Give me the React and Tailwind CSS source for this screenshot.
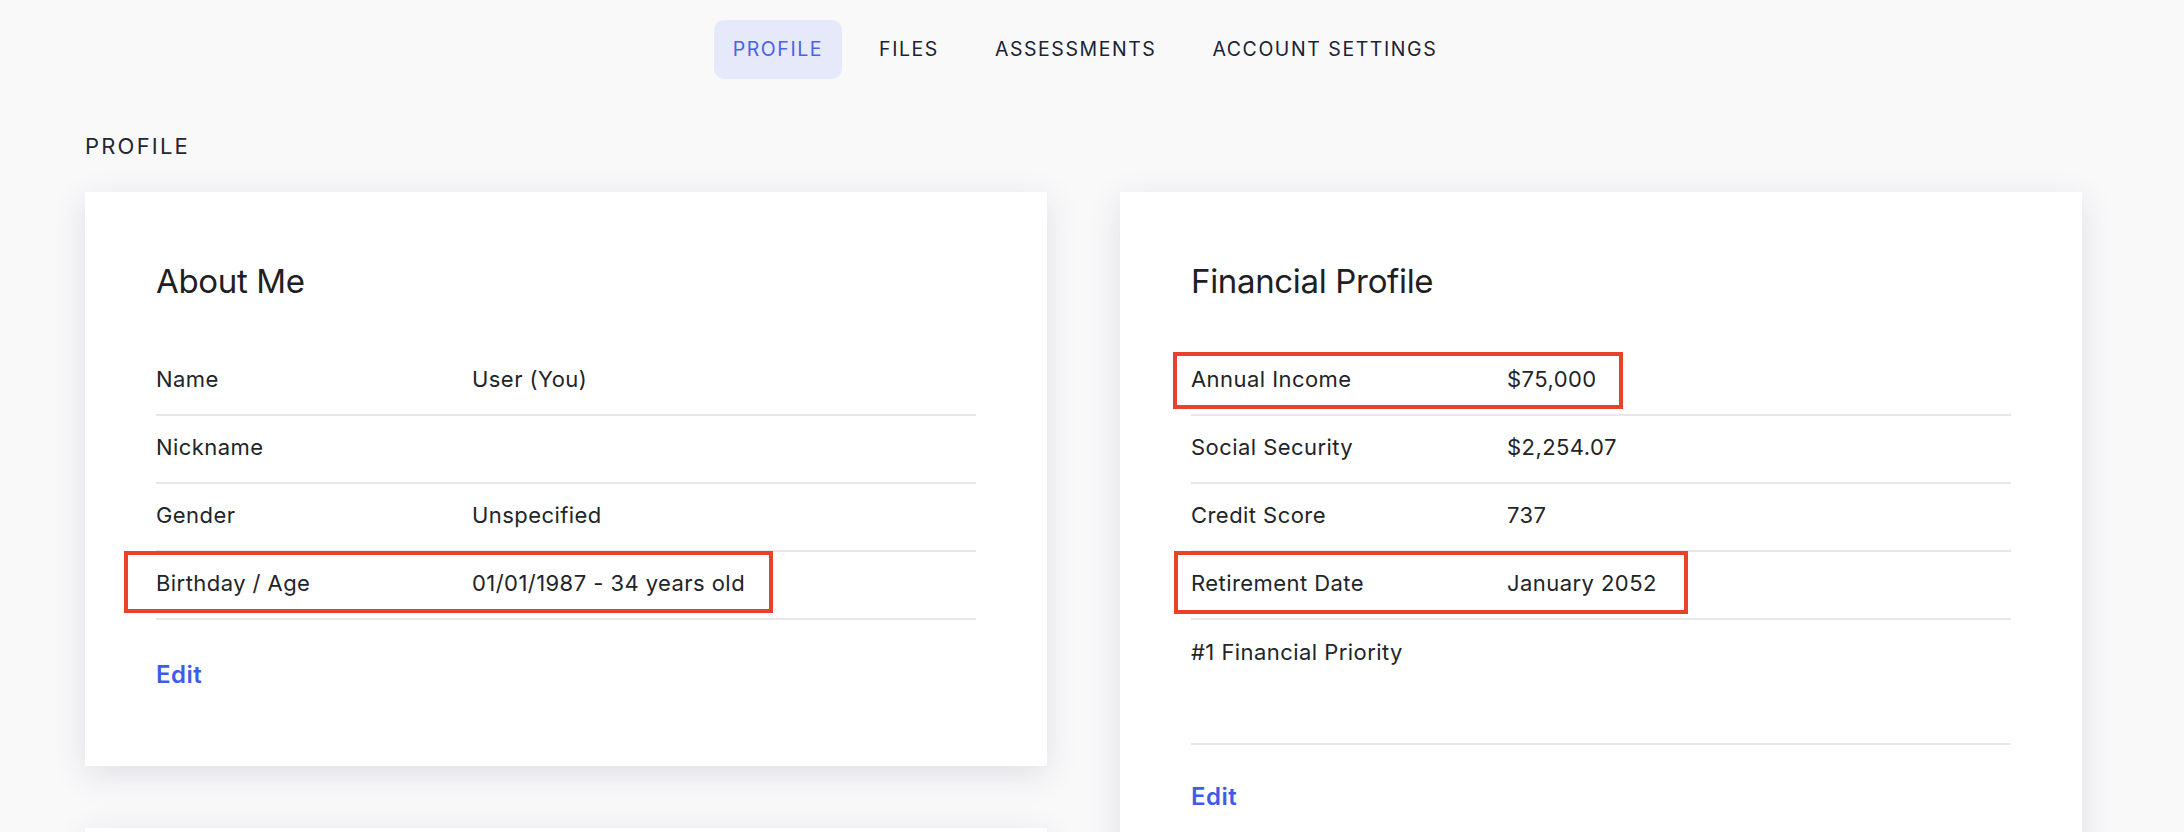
import React from 'react';

const tabs = ['Profile', 'Files', 'Assessments', 'Account Settings'];

const aboutRows = [
    { label: 'Name', value: 'User (You)' },
    { label: 'Nickname', value: '' },
    { label: 'Gender', value: 'Unspecified' },
    { label: 'Birthday / Age', value: '01/01/1987 - 34 years old', mark: 'left-[-32px] top-[-1px] w-[649px] h-[62px]' },
];

const financeRows = [
    { label: 'Annual Income', value: '$75,000', mark: 'left-[-18px] top-[4px] w-[450px] h-[57px]' },
    { label: 'Social Security', value: '$2,254.07' },
    { label: 'Credit Score', value: '737' },
    { label: 'Retirement Date', value: 'January 2052', mark: 'left-[-17px] top-[-1px] w-[514px] h-[63px]' },
];

function Row({ label, value, mark }) {
    return (
        <div className="relative flex items-center h-[68px] pb-[3px] border-b-2 border-[#e7e7e9]">
            <div className="w-[316px] shrink-0">{label}</div>
            <div>{value}</div>
            {/* anotação vermelha por cima da linha */}
            {mark && <div className={`absolute border-[4px] border-[#e8422b] ${mark}`} />}
        </div>
    );
}

function Card({ title, children }) {
    return (
        <div className="bg-white shadow-[0_8px_32px_rgba(40,45,80,0.12)] px-[71px] pt-[68px] pb-[77px]">
            <h3 className="text-[33px] leading-[42px] tracking-[-0.01em] text-[#1e2024]">{title}</h3>
            <div className="mt-[46px] text-[22px] tracking-[0.02em] text-[#222428]">{children}</div>
        </div>
    );
}

function EditLink({ className }) {
    return (
        <button className={`block text-[24px] leading-[28px] font-semibold tracking-[0.02em] text-[#3f5bea] ${className}`}>
            Edit
        </button>
    );
}

export default function App() {
    return (
        <div className="min-h-screen bg-[#f9f9fa] font-['Inter',sans-serif] overflow-hidden">
            {/* abas */}
            <nav className="flex justify-center gap-[18px] pt-[20px] pr-[14px]">
                {tabs.map((tab, i) => (
                    <div
                        key={tab}
                        className={
                            'h-[59px] px-[19px] flex items-center rounded-[10px] uppercase text-[19.5px] tracking-[0.08em] ' +
                            (i === 0 ? 'bg-[#e6e9f9] text-[#4a62ea]' : 'text-[#1b2233]')
                        }
                    >
                        {tab}
                    </div>
                ))}
            </nav>

            <div className="pl-[85px]">
                <h2 className="mt-[56px] text-[22px] leading-[22px] uppercase tracking-[0.1em] text-[#24272c]">
                    Profile
                </h2>

                <div className="mt-[35px] grid grid-cols-[962px_962px] gap-x-[73px] items-start">
                    <div>
                        <Card title="About Me">
                            {aboutRows.map(r => <Row key={r.label} {...r} />)}
                            <EditLink className="mt-[41px]" />
                        </Card>
                        <div className="mt-[62px] bg-white h-[300px] shadow-[0_8px_32px_rgba(40,45,80,0.12)]" />
                    </div>

                    <Card title="Financial Profile">
                        {financeRows.map(r => <Row key={r.label} {...r} />)}
                        <div className="h-[125px] pt-[18px] leading-[28px] border-b-2 border-[#e7e7e9]">
                            #1 Financial Priority
                        </div>
                        <EditLink className="mt-[38px]" />
                    </Card>
                </div>
            </div>
        </div>
    );
}
